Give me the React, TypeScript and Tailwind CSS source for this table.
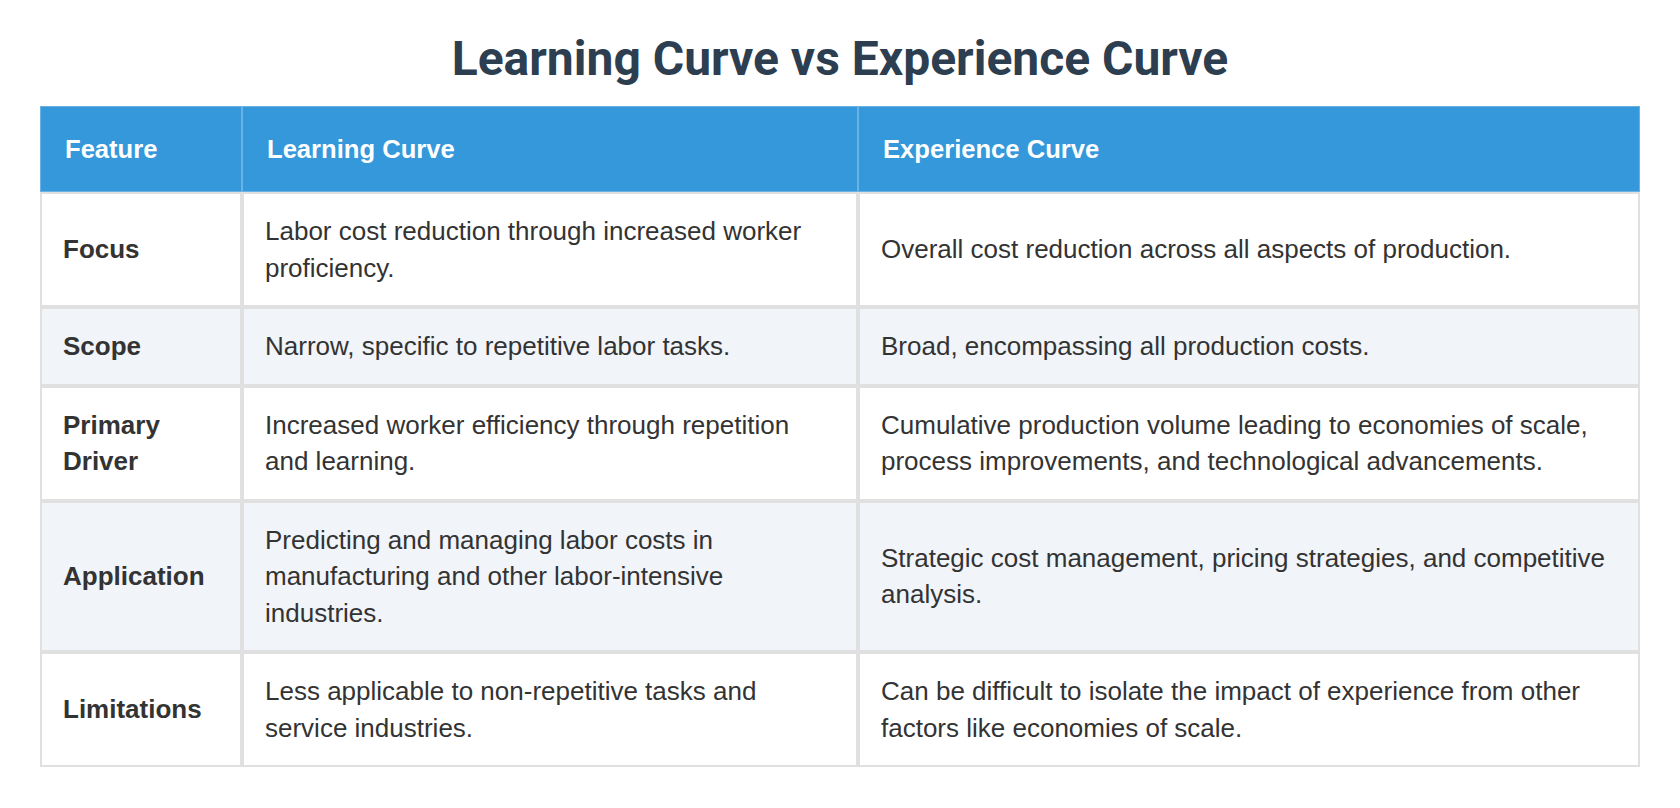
import React from 'react';

type Row = {
  feature: string;
  learning: string;
  experience: string;
};

const rows: Row[] = [
  {
    feature: 'Focus',
    learning: 'Labor cost reduction through increased worker proficiency.',
    experience: 'Overall cost reduction across all aspects of production.',
  },
  {
    feature: 'Scope',
    learning: 'Narrow, specific to repetitive labor tasks.',
    experience: 'Broad, encompassing all production costs.',
  },
  {
    feature: 'Primary Driver',
    learning: 'Increased worker efficiency through repetition and learning.',
    experience:
      'Cumulative production volume leading to economies of scale, process improvements, and technological advancements.',
  },
  {
    feature: 'Application',
    learning:
      'Predicting and managing labor costs in manufacturing and other labor-intensive industries.',
    experience: 'Strategic cost management, pricing strategies, and competitive analysis.',
  },
  {
    feature: 'Limitations',
    learning: 'Less applicable to non-repetitive tasks and service industries.',
    experience:
      'Can be difficult to isolate the impact of experience from other factors like economies of scale.',
  },
];

const App: React.FC = () => {
  return (
    <div className="min-h-screen bg-white px-10 pt-[28px] pb-[44px] font-['Liberation_Sans',Arial,sans-serif]">
      <h1 className="mb-[17px] text-center font-['Roboto',sans-serif] text-[48px] font-bold leading-[61px] text-[#2c3e50]">
        Learning Curve vs Experience Curve
      </h1>

      <table className="w-full table-fixed border-separate border-spacing-0 text-left text-[26px] leading-[36.5px] text-[#333]">
        <colgroup>
          <col className="w-[202px]" />
          <col className="w-[616px]" />
          <col />
        </colgroup>
        <thead>
          <tr className="bg-[#3498db] text-[25.6px] text-white">
            <th className="h-[86px] border border-[#6ab1e4] px-6 font-bold">Feature</th>
            <th className="border border-[#6ab1e4] px-6 font-bold">Learning Curve</th>
            <th className="border border-[#6ab1e4] px-6 font-bold">Experience Curve</th>
          </tr>
        </thead>
        <tbody>
          {rows.map((row, index) => (
            <tr key={row.feature} className={index % 2 === 1 ? 'bg-[#f1f4f9]' : 'bg-white'}>
              <td className="border-2 border-[#e0e0e0] px-[21px] py-[19px] align-middle font-bold">
                {row.feature}
              </td>
              <td className="border-2 border-[#e0e0e0] px-[21px] py-[19px] align-middle">{row.learning}</td>
              <td className="border-2 border-[#e0e0e0] px-[21px] py-[19px] align-middle">{row.experience}</td>
            </tr>
          ))}
        </tbody>
      </table>
    </div>
  );
};

export default App;
